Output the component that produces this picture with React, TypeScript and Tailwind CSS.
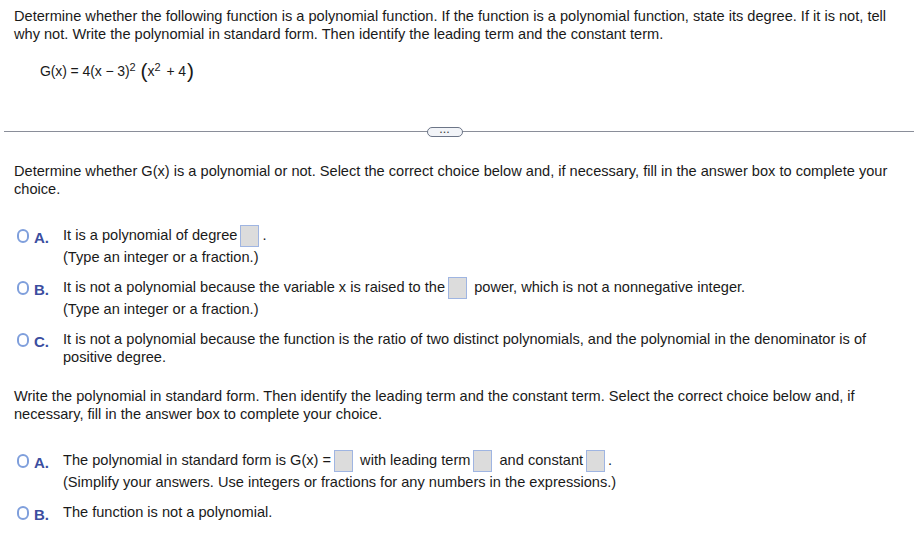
import React from "react";

function Box() {
  return (
    <span className="mx-[3px] inline-block h-[22px] w-[19px] border border-[#9fb5e2] bg-[#dcdcdc] align-middle" />
  );
}

function Choice({
  letter,
  children,
  note,
}: {
  letter: string;
  children: React.ReactNode;
  note?: string;
}) {
  return (
    <div className="flex">
      <div className="flex w-[49px] shrink-0 items-start pl-[17px] pt-[3px]">
        <span className="mt-[2px] inline-block h-[14px] w-[14px] rounded-full border-2 border-[#7f9fdc] bg-white" />
        <span className="ml-[5px] text-[15px] font-bold text-[#3b4ea0]">{letter}.</span>
      </div>
      <div className="pl-[14px] text-[14.6px] leading-[18px]">
        <div className="min-h-[22px] leading-[22px]">{children}</div>
        {note ? <div className="mt-[1px]">{note}</div> : null}
      </div>
    </div>
  );
}

export default function App() {
  return (
    <div
      className="h-[544px] w-[918px] bg-white text-[#1a1a1a]"
      style={{ fontFamily: '"Liberation Sans", Arial, sans-serif' }}
    >
      <div className="px-[14px] pt-[7px] text-[14.6px] leading-[18px]">
        <p>
          Determine whether the following function is a polynomial function. If the function is a polynomial
          function, state its degree. If it is not, tell why not. Write the polynomial in standard form. Then
          identify the leading term and the constant term.
        </p>
        <div className="mt-[17px] flex items-center pl-[26px] text-[14px] tracking-[-0.1px]">
          <span>G(x) = 4(x − 3)</span>
          <sup className="relative -top-[4px] text-[11px]">2</sup>
          <span className="ml-[5px] text-[21px] font-light leading-none">(</span>
          <span>x</span>
          <sup className="relative -top-[4px] text-[11px]">2</sup>
          <span className="ml-[6px]">+ 4</span>
          <span className="ml-[1px] text-[21px] font-light leading-none">)</span>
        </div>
      </div>

      <div className="relative mx-[4px] mt-[46px] h-[10px]">
        <div className="absolute left-0 right-0 top-[4px] h-px bg-[#8a8e99]" />
        <div className="absolute left-[423px] top-0 flex h-[10px] w-[36px] items-center justify-center rounded-full border border-[#6c7587] bg-[#f2f4f8] text-[9px] font-bold leading-none text-[#444]">
          <span className="-mt-[4px] tracking-[1px]">...</span>
        </div>
      </div>

      <div className="px-[14px] pt-[25px] text-[14.6px] leading-[18px]">
        <p>
          Determine whether G(x) is a polynomial or not. Select the correct choice below and, if necessary, fill
          in the answer box to complete your choice.
        </p>
      </div>

      <div className="mt-[26px] flex flex-col gap-[10px]">
        <Choice letter="A" note="(Type an integer or a fraction.)">
          It is a polynomial of degree
          <Box />.
        </Choice>
        <Choice letter="B" note="(Type an integer or a fraction.)">
          It is not a polynomial because the variable x is raised to the
          <Box /> power, which is not a nonnegative integer.
        </Choice>
        <Choice letter="C">
          <div className="leading-[18px] pt-[2px]">
            It is not a polynomial because the function is the ratio of two distinct polynomials, and the
            polynomial in the denominator is of positive degree.
          </div>
        </Choice>
      </div>

      <div className="px-[14px] pt-[21px] text-[14.6px] leading-[18px]">
        <p>
          Write the polynomial in standard form. Then identify the leading term and the constant term. Select
          the correct choice below and, if necessary, fill in the answer box to complete your choice.
        </p>
      </div>

      <div className="mt-[26px] flex flex-col gap-[10px]">
        <Choice
          letter="A"
          note="(Simplify your answers. Use integers or fractions for any numbers in the expressions.)"
        >
          The polynomial in standard form is G(x) =
          <Box /> with leading term
          <Box /> and constant
          <Box />.
        </Choice>
        <Choice letter="B">The function is not a polynomial.</Choice>
      </div>
    </div>
  );
}
